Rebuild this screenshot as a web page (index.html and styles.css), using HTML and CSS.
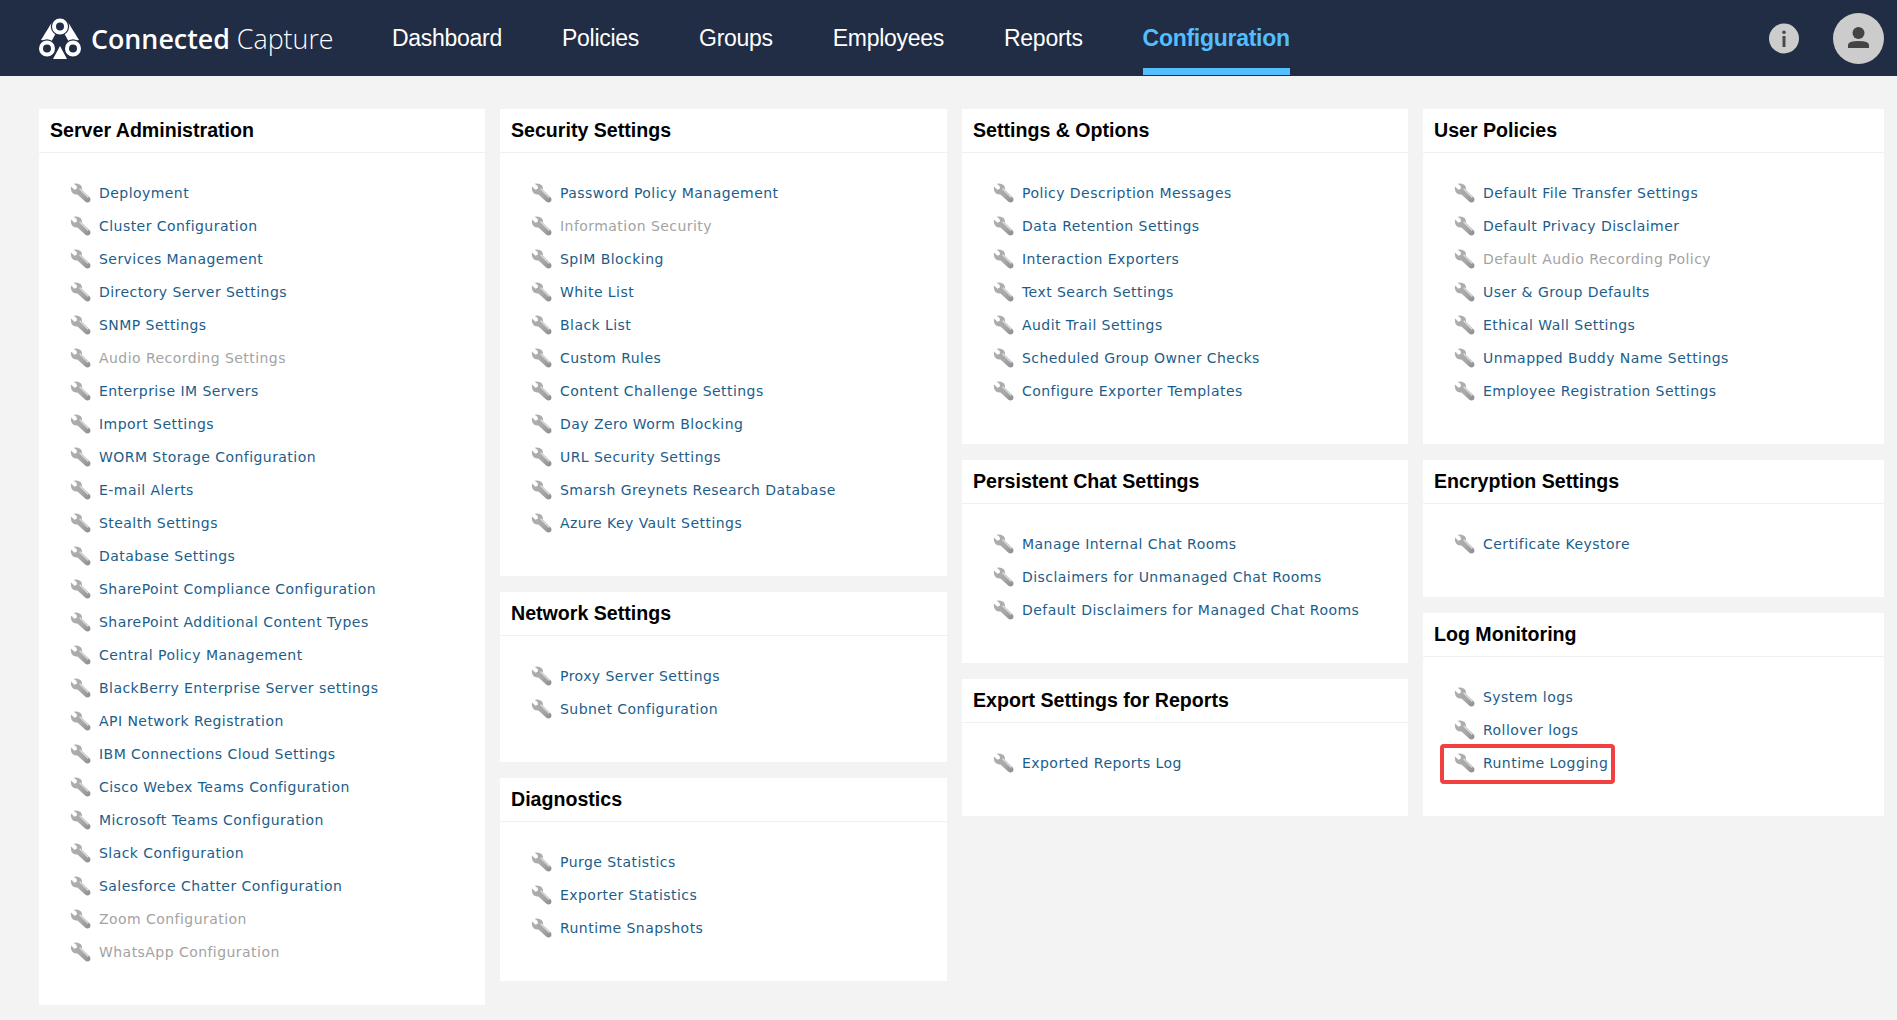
FILE: index.html
```html
<!DOCTYPE html>
<html lang="en">
<head>
    <meta charset="UTF-8">
    <meta name="viewport" content="width=device-width, initial-scale=1.0">
    <title>Connected Capture - Configuration</title>
    <link rel="stylesheet" href="styles.css">
</head>
<body>

    <!-- Shared wrench icon -->
    <svg class="defs" width="0" height="0">
        <defs>
            <linearGradient id="steel" x1="0" y1="0" x2="1" y2="1">
                <stop offset="0" stop-color="#b0b0b0"/>
                <stop offset="0.6" stop-color="#a8a8a8"/>
                <stop offset="1" stop-color="#8c8c8c"/>
            </linearGradient>
            <symbol id="wrench" viewBox="0 0 21 20">
                <path d="M1 3.6 L4.5 6.8 L7 5.6 L6.6 3 L3.6 .8 Q8 -.2 10.8 2.2 Q12.6 4.6 11.8 6.8 L19.8 14.4 Q21.2 16.8 19.6 18.8 Q17.4 20.2 15.4 18.8 L7.4 11.4 Q3.4 12 1.4 8.2 Q.6 6 1 3.6 Z" fill="url(#steel)"/>
                <path d="M9.6 5.6 L18.4 14.4" stroke="#d8d8d8" stroke-width="1.6" fill="none"/>
            </symbol>
        </defs>
    </svg>

    <!-- Top navigation -->
    <header class="topbar">
        <a class="brand">
            <svg class="brand-logo" width="43" height="41" viewBox="0 0 43 41">
                <path d="M12.5 5 L2 22 L12 24 L17 15 Z" fill="#fff"/>
                <path d="M29.5 5 L40 22 L30 24 L25 15 Z" fill="#fff"/>
                <path d="M21 28 L14 41 L28 41 Z" fill="#fff"/>
                <circle cx="21" cy="8.5" r="9.2" fill="#212c45"/>
                <circle cx="8" cy="30.5" r="9.2" fill="#212c45"/>
                <circle cx="34" cy="30.5" r="9.2" fill="#212c45"/>
                <circle cx="21" cy="8.5" r="6" fill="none" stroke="#fff" stroke-width="4"/>
                <circle cx="8" cy="30.5" r="6" fill="none" stroke="#fff" stroke-width="4"/>
                <circle cx="34" cy="30.5" r="6" fill="none" stroke="#fff" stroke-width="4"/>
            </svg>
            <span class="brand-name"><b>Connected</b> Capture</span>
        </a>
        <nav class="mainnav">
            <a>Dashboard</a>
            <a>Policies</a>
            <a>Groups</a>
            <a>Employees</a>
            <a>Reports</a>
            <a class="active">Configuration</a>
        </nav>
        <div class="topbar-tools">
            <span class="info-btn">
                <svg width="30" height="31" viewBox="0 0 30 31">
                    <circle cx="15" cy="15.5" r="15" fill="#ccc"/>
                    <rect x="13.2" y="7.5" width="3.6" height="3.6" rx="1.8" fill="#4a4a4a"/>
                    <rect x="13.5" y="13" width="3" height="11" fill="#4a4a4a"/>
                </svg>
            </span>
            <span class="avatar">
                <svg width="51" height="51" viewBox="0 0 51 51">
                    <circle cx="25.5" cy="25.5" r="25.5" fill="#ccc"/>
                    <circle cx="25.5" cy="20" r="6" fill="#444"/>
                    <path d="M15 35 L15 32 Q15 28 25.5 28 Q36 28 36 32 L36 35 Z" fill="#444"/>
                </svg>
            </span>
        </div>
    </header>

    <!-- Settings panels -->
    <main class="columns">
        <div class="column">
            <section class="panel">
                <h2>Server Administration</h2>
                <ul>
                    <li><svg class="ico"><use href="#wrench"/></svg><a>Deployment</a></li>
                    <li><svg class="ico"><use href="#wrench"/></svg><a>Cluster Configuration</a></li>
                    <li><svg class="ico"><use href="#wrench"/></svg><a>Services Management</a></li>
                    <li><svg class="ico"><use href="#wrench"/></svg><a>Directory Server Settings</a></li>
                    <li><svg class="ico"><use href="#wrench"/></svg><a>SNMP Settings</a></li>
                    <li><svg class="ico"><use href="#wrench"/></svg><a class="off">Audio Recording Settings</a></li>
                    <li><svg class="ico"><use href="#wrench"/></svg><a>Enterprise IM Servers</a></li>
                    <li><svg class="ico"><use href="#wrench"/></svg><a>Import Settings</a></li>
                    <li><svg class="ico"><use href="#wrench"/></svg><a>WORM Storage Configuration</a></li>
                    <li><svg class="ico"><use href="#wrench"/></svg><a>E-mail Alerts</a></li>
                    <li><svg class="ico"><use href="#wrench"/></svg><a>Stealth Settings</a></li>
                    <li><svg class="ico"><use href="#wrench"/></svg><a>Database Settings</a></li>
                    <li><svg class="ico"><use href="#wrench"/></svg><a>SharePoint Compliance Configuration</a></li>
                    <li><svg class="ico"><use href="#wrench"/></svg><a>SharePoint Additional Content Types</a></li>
                    <li><svg class="ico"><use href="#wrench"/></svg><a>Central Policy Management</a></li>
                    <li><svg class="ico"><use href="#wrench"/></svg><a>BlackBerry Enterprise Server settings</a></li>
                    <li><svg class="ico"><use href="#wrench"/></svg><a>API Network Registration</a></li>
                    <li><svg class="ico"><use href="#wrench"/></svg><a>IBM Connections Cloud Settings</a></li>
                    <li><svg class="ico"><use href="#wrench"/></svg><a>Cisco Webex Teams Configuration</a></li>
                    <li><svg class="ico"><use href="#wrench"/></svg><a>Microsoft Teams Configuration</a></li>
                    <li><svg class="ico"><use href="#wrench"/></svg><a>Slack Configuration</a></li>
                    <li><svg class="ico"><use href="#wrench"/></svg><a>Salesforce Chatter Configuration</a></li>
                    <li><svg class="ico"><use href="#wrench"/></svg><a class="off">Zoom Configuration</a></li>
                    <li><svg class="ico"><use href="#wrench"/></svg><a class="off">WhatsApp Configuration</a></li>
                </ul>
            </section>
        </div>

        <div class="column">
            <section class="panel">
                <h2>Security Settings</h2>
                <ul>
                    <li><svg class="ico"><use href="#wrench"/></svg><a>Password Policy Management</a></li>
                    <li><svg class="ico"><use href="#wrench"/></svg><a class="off">Information Security</a></li>
                    <li><svg class="ico"><use href="#wrench"/></svg><a>SpIM Blocking</a></li>
                    <li><svg class="ico"><use href="#wrench"/></svg><a>White List</a></li>
                    <li><svg class="ico"><use href="#wrench"/></svg><a>Black List</a></li>
                    <li><svg class="ico"><use href="#wrench"/></svg><a>Custom Rules</a></li>
                    <li><svg class="ico"><use href="#wrench"/></svg><a>Content Challenge Settings</a></li>
                    <li><svg class="ico"><use href="#wrench"/></svg><a>Day Zero Worm Blocking</a></li>
                    <li><svg class="ico"><use href="#wrench"/></svg><a>URL Security Settings</a></li>
                    <li><svg class="ico"><use href="#wrench"/></svg><a>Smarsh Greynets Research Database</a></li>
                    <li><svg class="ico"><use href="#wrench"/></svg><a>Azure Key Vault Settings</a></li>
                </ul>
            </section>
            <section class="panel">
                <h2>Network Settings</h2>
                <ul>
                    <li><svg class="ico"><use href="#wrench"/></svg><a>Proxy Server Settings</a></li>
                    <li><svg class="ico"><use href="#wrench"/></svg><a>Subnet Configuration</a></li>
                </ul>
            </section>
            <section class="panel">
                <h2>Diagnostics</h2>
                <ul>
                    <li><svg class="ico"><use href="#wrench"/></svg><a>Purge Statistics</a></li>
                    <li><svg class="ico"><use href="#wrench"/></svg><a>Exporter Statistics</a></li>
                    <li><svg class="ico"><use href="#wrench"/></svg><a>Runtime Snapshots</a></li>
                </ul>
            </section>
        </div>

        <div class="column">
            <section class="panel">
                <h2>Settings &amp; Options</h2>
                <ul>
                    <li><svg class="ico"><use href="#wrench"/></svg><a>Policy Description Messages</a></li>
                    <li><svg class="ico"><use href="#wrench"/></svg><a>Data Retention Settings</a></li>
                    <li><svg class="ico"><use href="#wrench"/></svg><a>Interaction Exporters</a></li>
                    <li><svg class="ico"><use href="#wrench"/></svg><a>Text Search Settings</a></li>
                    <li><svg class="ico"><use href="#wrench"/></svg><a>Audit Trail Settings</a></li>
                    <li><svg class="ico"><use href="#wrench"/></svg><a>Scheduled Group Owner Checks</a></li>
                    <li><svg class="ico"><use href="#wrench"/></svg><a>Configure Exporter Templates</a></li>
                </ul>
            </section>
            <section class="panel">
                <h2>Persistent Chat Settings</h2>
                <ul>
                    <li><svg class="ico"><use href="#wrench"/></svg><a>Manage Internal Chat Rooms</a></li>
                    <li><svg class="ico"><use href="#wrench"/></svg><a>Disclaimers for Unmanaged Chat Rooms</a></li>
                    <li><svg class="ico"><use href="#wrench"/></svg><a>Default Disclaimers for Managed Chat Rooms</a></li>
                </ul>
            </section>
            <section class="panel">
                <h2>Export Settings for Reports</h2>
                <ul>
                    <li><svg class="ico"><use href="#wrench"/></svg><a>Exported Reports Log</a></li>
                </ul>
            </section>
        </div>

        <div class="column">
            <section class="panel">
                <h2>User Policies</h2>
                <ul>
                    <li><svg class="ico"><use href="#wrench"/></svg><a>Default File Transfer Settings</a></li>
                    <li><svg class="ico"><use href="#wrench"/></svg><a>Default Privacy Disclaimer</a></li>
                    <li><svg class="ico"><use href="#wrench"/></svg><a class="off">Default Audio Recording Policy</a></li>
                    <li><svg class="ico"><use href="#wrench"/></svg><a>User &amp; Group Defaults</a></li>
                    <li><svg class="ico"><use href="#wrench"/></svg><a>Ethical Wall Settings</a></li>
                    <li><svg class="ico"><use href="#wrench"/></svg><a>Unmapped Buddy Name Settings</a></li>
                    <li><svg class="ico"><use href="#wrench"/></svg><a>Employee Registration Settings</a></li>
                </ul>
            </section>
            <section class="panel">
                <h2>Encryption Settings</h2>
                <ul>
                    <li><svg class="ico"><use href="#wrench"/></svg><a>Certificate Keystore</a></li>
                </ul>
            </section>
            <section class="panel">
                <h2>Log Monitoring</h2>
                <ul>
                    <li><svg class="ico"><use href="#wrench"/></svg><a>System logs</a></li>
                    <li><svg class="ico"><use href="#wrench"/></svg><a>Rollover logs</a></li>
                    <li class="flagged"><svg class="ico"><use href="#wrench"/></svg><a>Runtime Logging</a></li>
                </ul>
            </section>
        </div>
    </main>

</body>
</html>
```

FILE: styles.css
```css
/* Page */
body {
    margin: 0;
    height: 1020px;
    overflow: hidden;
    background: #f3f3f3;
    font-family: 'Liberation Sans', Arial, sans-serif;
}

.defs {
    display: block;
    height: 0;
}

/* Top navigation */
.topbar {
    display: flex;
    align-items: flex-start;
    height: 76px;
    padding: 0 13px 0 39px;
    background: #212c45;
}

.brand {
    display: flex;
    align-items: center;
    width: 353px;
    height: 76px;
    color: #ffffff;
}

.brand-logo {
    margin-top: 1px;
}

.brand-name {
    margin-left: 9px;
    padding-top: 1px;
    font-family: 'Open Sans', sans-serif;
    font-size: 26.8px;
    font-weight: 300;
    white-space: nowrap;
}

.brand-name b {
    font-weight: 600;
}

.mainnav {
    display: flex;
    gap: 60px;
}

.mainnav a {
    display: flex;
    align-items: center;
    height: 75px;
    padding-top: 8px;
    box-sizing: border-box;
    border-bottom: 7px solid transparent;
    color: #ffffff;
    font-size: 23px;
    letter-spacing: -0.28px;
    white-space: nowrap;
}

.mainnav a.active {
    border-bottom-color: #52bfff;
    color: #52bfff;
    font-weight: bold;
}

.topbar-tools {
    display: flex;
    align-items: center;
    gap: 34px;
    height: 76px;
    margin-left: auto;
}

.info-btn,
.avatar {
    display: flex;
}

/* Panel columns */
.columns {
    display: grid;
    grid-template-columns: 446px 447px 446px 1fr;
    gap: 15px;
    padding: 33px 13px 0 39px;
}

.column {
    display: flex;
    flex-direction: column;
    gap: 16px;
}

.panel {
    background: #ffffff;
}

.panel h2 {
    height: 44px;
    margin: 0;
    padding: 0 11px;
    border-bottom: 1px solid #f0f0f0;
    box-sizing: border-box;
    color: #000000;
    font-size: 19.6px;
    font-weight: bold;
    line-height: 43px;
}

.panel ul {
    margin: 0;
    padding: 23px 0 37px 31px;
    list-style: none;
}

.panel li {
    display: flex;
    align-items: center;
    height: 33px;
    position: relative;
}

.ico {
    flex: none;
    width: 21px;
    height: 20px;
    margin-right: 8px;
}

.panel li a {
    color: #1c5d8a;
    font-family: 'DejaVu Sans', Verdana, sans-serif;
    font-size: 14px;
    letter-spacing: 0.45px;
    white-space: nowrap;
}

.panel li a.off {
    color: #a3a3a3;
}

/* Red callout drawn over the row */
.flagged::after {
    content: "";
    position: absolute;
    left: -14px;
    top: -2px;
    width: 167px;
    height: 32px;
    border: 4px solid #f04040;
    border-radius: 4px;
}
```
